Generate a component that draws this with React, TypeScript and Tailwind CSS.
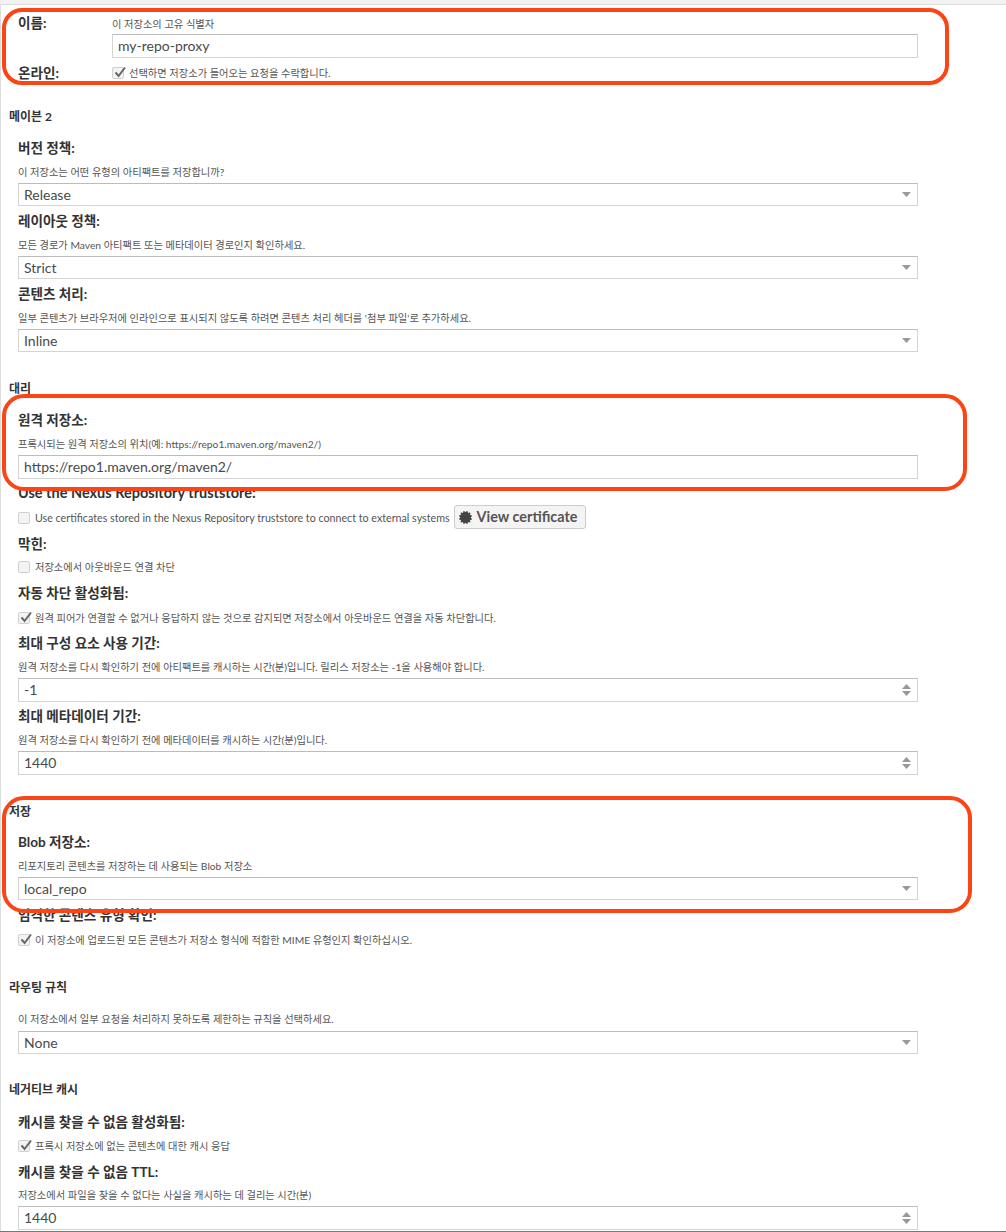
import React from "react";
import { FaCertificate } from "react-icons/fa";

const fontStack = "font-['Lato','Noto_Sans_CJK_KR',sans-serif]";

function Label({ children }: { children: React.ReactNode }) {
  return <div className="h-5 text-[13.6px] leading-5 font-bold text-[#333]">{children}</div>;
}

function Help({ children }: { children: React.ReactNode }) {
  return <div className="mt-[4px] h-[21px] text-[10.25px] leading-5 text-[#555]">{children}</div>;
}

function Caret() {
  return (
    <svg width="9" height="5" viewBox="0 0 9 5" className="fill-[#999]">
      <path d="M0 0h9L4.5 5z" />
    </svg>
  );
}

function Spinner() {
  return (
    <div className="flex flex-col gap-[2px]">
      <svg width="9" height="5" viewBox="0 0 9 5" className="fill-[#999]">
        <path d="M0 5h9L4.5 0z" />
      </svg>
      <Caret />
    </div>
  );
}

function Control({ value, kind }: { value: string; kind?: "select" | "number" }) {
  return (
    <div className={`flex items-center justify-between border border-[#d4d4d4] border-t-[#bbb] bg-white pl-[5px] pr-[6px] ${kind === "select" ? "mb-[1px] h-[23px]" : "h-6"}`}>
      <input
        readOnly
        value={value}
        className="w-full bg-transparent pb-[1px] text-[14px] text-[#4a4a4a] outline-none"
      />
      {kind === "select" && <Caret />}
      {kind === "number" && <Spinner />}
    </div>
  );
}

function Check({ checked, children }: { checked?: boolean; children: React.ReactNode }) {
  return (
    <div className="flex items-center gap-[5px] text-[10.25px] leading-5 text-[#555]">
      <span className="relative block h-3 w-3 shrink-0 rounded-[2px] border border-[#d0d0d0] bg-[#f3f3f3]">
        {checked && (
          <svg viewBox="0 0 14 14" className="absolute -top-[3px] left-0 h-[14px] w-[14px]">
            <path d="M2.5 7.5 5.6 11 12 2.5" fill="none" stroke="#666" strokeWidth="2" />
          </svg>
        )}
      </span>
      <span>{children}</span>
    </div>
  );
}

function Field({ label, help, value, kind }: { label: string; help: string; value: string; kind?: "select" | "number" }) {
  return (
    <div className="mb-1">
      <Label>{label}</Label>
      <Help>{help}</Help>
      <Control value={value} kind={kind} />
    </div>
  );
}

function Section({ children, className }: { children: React.ReactNode; className: string }) {
  return <div className={`-ml-[9px] h-5 text-[12px] leading-5 font-bold text-[#333] ${className}`}>{children}</div>;
}

export default function App() {
  return (
    <div className={`relative h-[1232px] w-[1006px] overflow-hidden bg-white ${fontStack}`}>
      <div className="h-[5px] border-b border-[#ddd] bg-[#f2f2f2]" />
      <div className="flex h-[1226px] w-[918px] flex-col border-l border-[#ddd] pl-[17px]">
        <div className="grid grid-cols-[94px_1fr] pt-2">
          <div className="h-5 text-[13.6px] leading-5 font-bold text-[#333]">이름:</div>
          <div className="h-[21px] pt-[1px] text-[10.25px] leading-5 text-[#555]">이 저장소의 고유 식별자</div>
          <div />
          <Control value="my-repo-proxy" />
          <div className="mt-[5px] h-5 text-[13.6px] leading-5 font-bold text-[#333]">온라인:</div>
          <div className="mt-[5px]">
            <Check checked>선택하면 저장소가 들어오는 요청을 수락합니다.</Check>
          </div>
        </div>

        <Section className="mt-[24px] mb-[11px]">메이븐 2</Section>
        <Field label="버전 정책:" help="이 저장소는 어떤 유형의 아티팩트를 저장합니까?" value="Release" kind="select" />
        <Field label="레이아웃 정책:" help="모든 경로가 Maven 아티팩트 또는 메타데이터 경로인지 확인하세요." value="Strict" kind="select" />
        <Field label="콘텐츠 처리:" help="일부 콘텐츠가 브라우저에 인라인으로 표시되지 않도록 하려면 콘텐츠 처리 헤더를 '첨부 파일'로 추가하세요." value="Inline" kind="select" />

        <Section className="mt-[22px] mb-[11px]">대리</Section>
        <Field label="원격 저장소:" help="프록시되는 원격 저장소의 위치(예: https://repo1.maven.org/maven2/)" value="https://repo1.maven.org/maven2/" />

        <div className="h-5 text-[14.5px] leading-5 font-bold text-[#333]">Use the Nexus Repository truststore:</div>
        <div className="mt-[2px] mb-[5px] flex h-6 items-center gap-1">
          <div className="mt-[1px] text-[10.7px]">
            <div className="flex items-center gap-[5px] leading-5 text-[#555]">
              <span className="block h-3 w-3 shrink-0 rounded-[2px] border border-[#d0d0d0] bg-[#f3f3f3]" />
              <span>Use certificates stored in the Nexus Repository truststore to connect to external systems</span>
            </div>
          </div>
          <button className="flex h-6 w-[132px] items-center gap-[5px] rounded-[3px] border border-[#ccc] bg-[#f4f4f4] pl-[4px] text-[14.4px] font-bold text-[#555]">
            <FaCertificate className="text-[13px] text-[#444]" />
            View certificate
          </button>
        </div>

        <Label>막힌:</Label>
        <div className="mt-[3px] mb-[6px]">
          <Check>저장소에서 아웃바운드 연결 차단</Check>
        </div>

        <Label>자동 차단 활성화됨:</Label>
        <div className="mt-[5px] mb-[5px]">
          <Check checked>원격 피어가 연결할 수 없거나 응답하지 않는 것으로 감지되면 저장소에서 아웃바운드 연결을 자동 차단합니다.</Check>
        </div>

        <Field label="최대 구성 요소 사용 기간:" help="원격 저장소를 다시 확인하기 전에 아티팩트를 캐시하는 시간(분)입니다. 릴리스 저장소는 -1을 사용해야 합니다." value="-1" kind="number" />
        <Field label="최대 메타데이터 기간:" help="원격 저장소를 다시 확인하기 전에 메타데이터를 캐시하는 시간(분)입니다." value="1440" kind="number" />

        <Section className="mt-[23px] mb-[10px]">저장</Section>
        <Field label="Blob 저장소:" help="리포지토리 콘텐츠를 저장하는 데 사용되는 Blob 저장소" value="local_repo" kind="select" />

        <Label>엄격한 콘텐츠 유형 확인:</Label>
        <div className="mt-[5px] mb-[28px]">
          <Check checked>이 저장소에 업로드된 모든 콘텐츠가 저장소 형식에 적합한 MIME 유형인지 확인하십시오.</Check>
        </div>

        <Section className="mb-[11px]">라우팅 규칙</Section>
        <div className="h-[22px] text-[10.25px] leading-5 text-[#555]">이 저장소에서 일부 요청을 처리하지 못하도록 제한하는 규칙을 선택하세요.</div>
        <Control value="None" kind="select" />

        <Section className="mt-[25px] mb-[12px]">네거티브 캐시</Section>
        <Label>캐시를 찾을 수 없음 활성화됨:</Label>
        <div className="mt-[4px] mb-[6px]">
          <Check checked>프록시 저장소에 없는 콘텐츠에 대한 캐시 응답</Check>
        </div>
        <Label>캐시를 찾을 수 없음 TTL:</Label>
        <div className="mt-[3px] h-[21px] text-[10.25px] leading-5 text-[#555]">저장소에서 파일을 찾을 수 없다는 사실을 캐시하는 데 걸리는 시간(분)</div>
        <Control value="1440" kind="number" />
      </div>
      <div className="h-px bg-[#777]" />

      {/* red annotation boxes drawn over the form */}
      <div className="absolute left-[2px] top-[8px] h-[77px] w-[947px] rounded-[20px] border-[4px] border-[#fb4516]" />
      <div className="absolute left-[2px] top-[394px] h-[97px] w-[965px] rounded-[22px] border-[4px] border-[#fb4516]" />
      <div className="absolute left-[2px] top-[796px] h-[117px] w-[970px] rounded-[22px] border-[4px] border-[#fb4516]" />
    </div>
  );
}
